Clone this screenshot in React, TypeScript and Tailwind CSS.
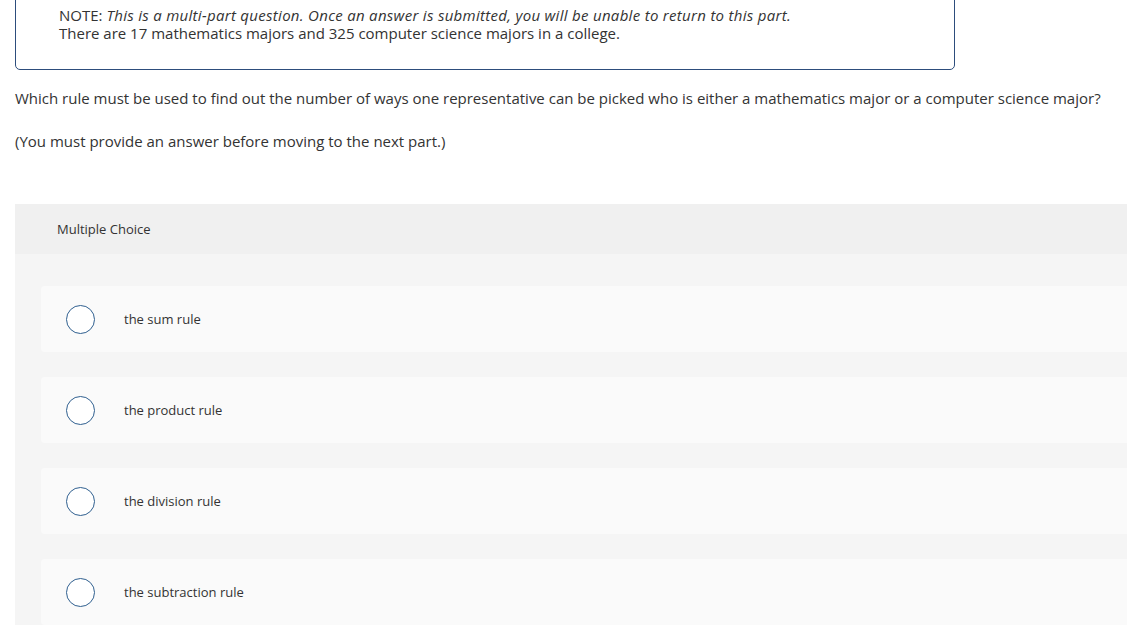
const options = ['the sum rule', 'the product rule', 'the division rule', 'the subtraction rule']

export default function App() {
    return (
        <div className="w-[1127px] h-[632px] overflow-hidden bg-white text-[#333] font-['Open_Sans',sans-serif]">
            <div className="ml-[15px] mt-[-20px] w-[940px] h-[90px] border border-[#2d4d7c] rounded-[5px] pl-[43px] pt-[25px] text-[15px] leading-[18px]">
                <p>
                    NOTE: <i className="tracking-[0.3px]">This is a multi-part question. Once an answer is submitted, you will be unable to return to this part.</i>
                </p>
                <p>There are 17 mathematics majors and 325 computer science majors in a college.</p>
            </div>

            <p className="ml-[15px] mt-[18px] text-[15px] leading-[20px]">
                Which rule must be used to find out the number of ways one representative can be picked who is either a mathematics major or a computer science major?
            </p>
            <p className="ml-[15px] mt-[23px] text-[15px] leading-[20px]">(You must provide an answer before moving to the next part.)</p>

            <div className="ml-[15px] mt-[53px] bg-[#f5f5f5]">
                <div className="h-[50px] bg-[#f0f0f0] flex items-center pl-[42px] pt-[1px] text-[13px]">Multiple Choice</div>
                <div className="pl-[26px] pt-[32px] flex flex-col gap-[25px]">
                    {options.map((o) => (
                        <div key={o} className="h-[66px] bg-[#fafafa] rounded-l-[4px] flex items-center">
                            <span className="ml-[25px] w-[29px] h-[29px] rounded-full border-[1.5px] border-[#2f5f8f] bg-white" />
                            <span className="ml-[29px] pt-[2px] text-[13px]">{o}</span>
                        </div>
                    ))}
                </div>
            </div>
        </div>
    )
}
